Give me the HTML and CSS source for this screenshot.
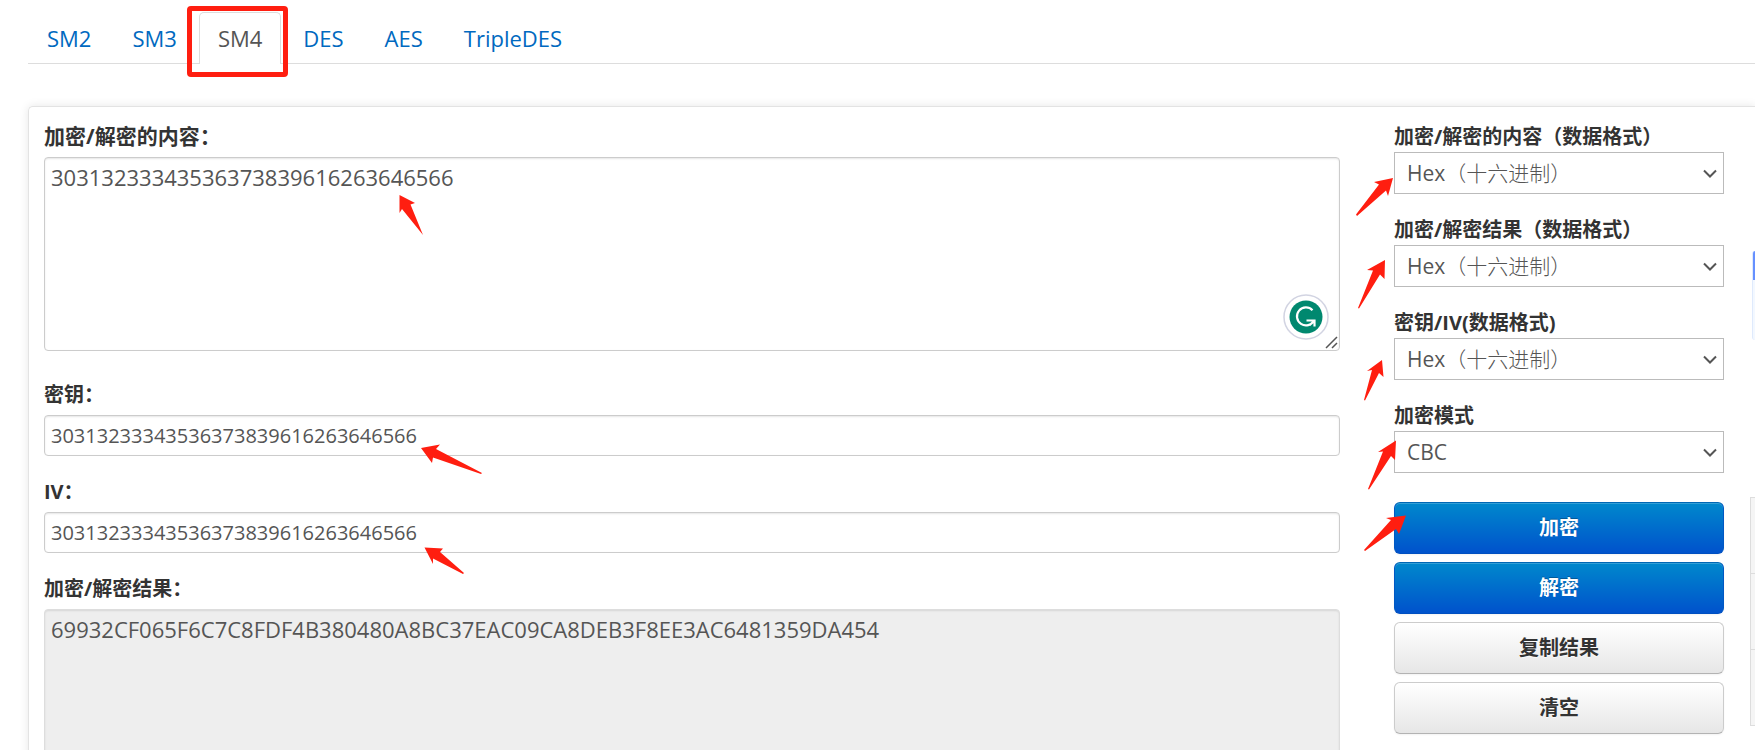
FILE: index.html
```html
<!DOCTYPE html>
<html lang="zh-CN">
<head>
<meta charset="utf-8">
<title>SM4</title>
<link rel="stylesheet" href="styles.css">
</head>
<body>
<nav class="tabs">
  <a class="tab" href="#sm2">SM2</a>
  <a class="tab" href="#sm3">SM3</a>
  <a class="tab tab-active" href="#sm4">SM4<span class="highlight"></span></a>
  <a class="tab" href="#des">DES</a>
  <a class="tab" href="#aes">AES</a>
  <a class="tab" href="#tripledes">TripleDES</a>
</nav>
<main class="panel">
  <section class="fields">
    <div class="field field-content">
      <label class="label label-large" for="content">加密/解密的内容：</label>
      <div class="area-wrap">
        <textarea class="control area" id="content">30313233343536373839616263646566</textarea>
        <svg class="checker" viewBox="0 0 46 46" aria-hidden="true">
          <circle cx="23" cy="23" r="22" fill="#fff" stroke="#d2d4e2" stroke-width="1.5"/>
          <circle cx="23" cy="23" r="16.5" fill="#00886f"/>
          <path d="M29.5 16.2A9 9 0 1 0 31 26.5M23.5 26.5h8v6M31.5 26.5l-5 4.800" fill="none" stroke="#fff" stroke-width="2.200"/>
        </svg>
        <svg class="grip" viewBox="0 0 13 13" aria-hidden="true"><path d="M1 12L12 1M7 12L12 7" stroke="#555" stroke-width="1.500"/></svg>
      </div>
    </div>
    <div class="field field-line">
      <label class="label" for="key">密钥：</label>
      <input class="control line" id="key" type="text" value="30313233343536373839616263646566">
    </div>
    <div class="field field-line">
      <label class="label" for="iv">IV：</label>
      <input class="control line" id="iv" type="text" value="30313233343536373839616263646566">
    </div>
    <div class="field">
      <label class="label" for="result">加密/解密结果：</label>
      <textarea class="control area result" id="result" readonly>69932CF065F6C7C8FDF4B380480A8BC37EAC09CA8DEB3F8EE3AC6481359DA454</textarea>
    </div>
  </section>
  <section class="options">
    <div class="option">
      <label class="option-label" for="in-format">加密/解密的内容（数据格式）</label>
      <div class="select-wrap"><select class="select" id="in-format"><option>Hex（十六进制）</option></select>
      <svg class="chevron" viewBox="0 0 14 9"><path d="M1 1.500L7 7.500L13 1.500"/></svg></div>
    </div>
    <div class="option">
      <label class="option-label" for="out-format">加密/解密结果（数据格式）</label>
      <div class="select-wrap"><select class="select" id="out-format"><option>Hex（十六进制）</option></select>
      <svg class="chevron" viewBox="0 0 14 9"><path d="M1 1.500L7 7.500L13 1.500"/></svg></div>
    </div>
    <div class="option">
      <label class="option-label" for="key-format">密钥/IV(数据格式)</label>
      <div class="select-wrap"><select class="select" id="key-format"><option>Hex（十六进制）</option></select>
      <svg class="chevron" viewBox="0 0 14 9"><path d="M1 1.500L7 7.500L13 1.500"/></svg></div>
    </div>
    <div class="option">
      <label class="option-label" for="mode">加密模式</label>
      <div class="select-wrap"><select class="select" id="mode"><option>CBC</option></select>
      <svg class="chevron" viewBox="0 0 14 9"><path d="M1 1.500L7 7.500L13 1.500"/></svg></div>
    </div>
    <div class="buttons">
      <button class="button primary" type="button">加密</button>
      <button class="button primary" type="button">解密</button>
      <button class="button" type="button">复制结果</button>
      <button class="button" type="button">清空</button>
    </div>
  </section>
</main>
<aside class="widget" aria-hidden="true"></aside>
<aside class="toolbar" aria-hidden="true"><i></i><i></i><i></i></aside>
<svg class="arrows" width="1755" height="750" viewBox="0 0 1755 750" aria-hidden="true">
  <path d="M399.500 195L415 203L410.500 204.500L423 235L402 209L399.500 213Z"/>
  <path d="M421 448L440 444.500L436 449L482 473L481 474L433 457.500L432 463Z"/>
  <path d="M424.500 547.500L443 548.500L440 552L464 573L463 574L433 558.500L433 564Z"/>
  <path d="M1393 178L1374 182L1379 184.500L1356 214.500L1357 216L1386 190.500L1388 196Z"/>
  <path d="M1385 260L1367 270L1373 270.500L1358 308L1359 308.500L1380 274.500L1384.500 279Z"/>
  <path d="M1382 360L1367 371L1372 370L1364 400L1365 400.500L1379 373L1383.500 377Z"/>
  <path d="M1396 440.500L1378 452L1383 451.500L1368 489L1369 489.500L1391 456L1395 460Z"/>
  <path d="M1406 515.500L1386 518L1391 520L1364 550L1365 551L1396 529L1399 534Z"/>
</svg>
</body>
</html>
```
FILE: styles.css
```css
* { box-sizing: border-box; }
html { height: 100%; overflow: hidden; }
body {
  position: relative;
  display: flex;
  flex-direction: column;
  height: 100%;
  margin: 0;
  padding: 12px 0 0 28px;
  overflow: hidden;
  background: #fff;
  color: #333;
  font: 20px/28px "Open Sans", "Noto Sans CJK SC", sans-serif;
}
.tabs {
  display: flex;
  flex: none;
  gap: 3px;
  height: 52px;
  border-bottom: 1px solid #ddd;
}
.tab {
  position: relative;
  height: 52px;
  padding: 11px 18px 0;
  border: 1px solid transparent;
  border-bottom: 0;
  color: #0069c0;
  font-size: 22px;
  text-decoration: none;
}
.tab-active {
  border-color: #ddd;
  border-radius: 5px 5px 0 0;
  background: #fff;
  color: #555;
}
.highlight {
  position: absolute;
  inset: -7px -8px -13px -13px;
  border: 5px solid #ff1e10;
  border-radius: 4px;
}
.panel {
  display: grid;
  flex: 1;
  grid-template-columns: 1fr 330px;
  gap: 54px;
  margin-top: 42px;
  padding: 16px 31px 0 15px;
  border: 1px solid #e3e3e3;
  border-width: 1px 0 0 1px;
  border-radius: 5px 0 0 0;
  box-shadow: 0 0 10px rgba(0, 0, 0, 0.1);
}
.field { display: flex; flex-direction: column; }
.field-content { margin-bottom: 30px; }
.field-line { margin-bottom: 22px; }
.label { height: 34px; color: #333; font-weight: 700; }
.label-large { font-size: 21px; line-height: 26px; }
.control {
  width: 100%;
  margin: 0;
  border: 1px solid #ccc;
  border-radius: 4px;
  outline: 0;
  background: #fff;
  box-shadow: inset 0 1px 2px rgba(0, 0, 0, 0.1);
  color: #555;
  font-family: inherit;
}
.line { height: 41px; padding: 0 6px 1px; font-size: 20px; }
.area-wrap { position: relative; display: flex; }
.area {
  height: 194px;
  padding: 5px 6px;
  font-size: 22px;
  line-height: 28px;
  resize: none;
}
.result { border-color: #ddd; background: #eee; }
.checker { position: absolute; right: 11px; bottom: 11px; width: 46px; height: 46px; }
.grip { position: absolute; right: 2px; bottom: 2px; width: 13px; height: 13px; }
.option { margin-bottom: 22px; }
.option-label {
  display: block;
  height: 29px;
  font-weight: 700;
}
.select-wrap { position: relative; display: flex; }
.select {
  width: 100%;
  height: 42px;
  margin: 0;
  padding: 0 12px;
  appearance: none;
  border: 1px solid #bbb;
  border-radius: 0;
  background: #fff;
  color: #555;
  font: 21px "Open Sans", "Noto Sans CJK SC Light", "Noto Sans CJK SC", sans-serif;
}
.chevron {
  position: absolute;
  top: 17px;
  right: 7px;
  width: 14px;
  height: 9px;
  fill: none;
  stroke: #555;
  stroke-width: 2;
  pointer-events: none;
}
.buttons { display: grid; gap: 8px; margin-top: 29px; }
.button {
  height: 52px;
  padding: 0 0 3px;
  border: 1px solid #ccc;
  border-bottom-color: #b3b3b3;
  border-radius: 6px;
  background: linear-gradient(#fff, #e6e6e6);
  box-shadow: inset 0 1px 0 rgba(255, 255, 255, 0.2), 0 1px 2px rgba(0, 0, 0, 0.05);
  color: #333;
  font: 700 20px "Open Sans", "Noto Sans CJK SC", sans-serif;
  text-shadow: 0 1px 1px rgba(255, 255, 255, 0.75);
}
.primary {
  border-color: #0067b5 #0058c4 #004fc0;
  background: linear-gradient(#0088cc, #0052cc);
  box-shadow: inset 0 1px 0 rgba(255, 255, 255, 0.2), 0 1px 2px rgba(0, 0, 0, 0.05);
  color: #fff;
  text-shadow: 0 -1px 0 rgba(0, 0, 0, 0.25);
}
.widget {
  position: absolute;
  top: 251px;
  right: 0;
  width: 3px;
  height: 89px;
  border-left: 1px solid #dfeafc;
  border-radius: 4px 0 0 4px;
  background: linear-gradient(#6690ff 29px, #f3f8ff 29px) border-box;
}
.toolbar {
  position: absolute;
  top: 497px;
  right: 0;
  display: grid;
  width: 5px;
  height: 229px;
  border: 1px solid #ddd;
  border-right: 0;
  background: #f5f5f5;
}
.toolbar i + i { border-top: 1px solid #ddd; }
.arrows { position: absolute; top: 0; left: 0; fill: #ff1e10; pointer-events: none; }
```
